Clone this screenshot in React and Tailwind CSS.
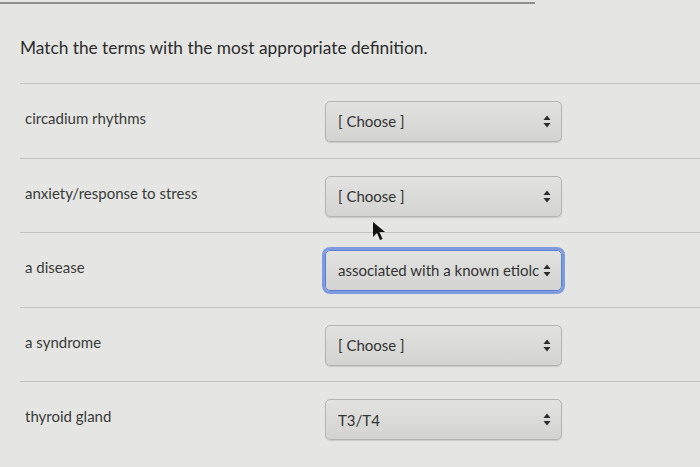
import React from 'react';

const rows = [
    { term: 'circadium rhythms', value: '[ Choose ]' },
    { term: 'anxiety/response to stress', value: '[ Choose ]' },
    { term: 'a disease', value: 'associated with a known etiolc', focused: true },
    { term: 'a syndrome', value: '[ Choose ]' },
    { term: 'thyroid gland', value: 'T3/T4' },
];

// little up/down caret like the native select
const Caret = () => (
    <svg width="8" height="13" viewBox="0 0 8 13" className="shrink-0">
        <path d="M4 0.5 L7.5 5 L0.5 5 Z" fill="#2b2b2b" />
        <path d="M4 12.5 L7.5 8 L0.5 8 Z" fill="#2b2b2b" />
    </svg>
);

const SelectBox = ({ value, focused }) => (
    <div
        className={
            'flex items-center justify-between w-[237px] h-[41px] pl-[12px] pr-[10px] rounded-[5px] border bg-gradient-to-b from-[#e2e3e1] to-[#d3d4d2] shadow-[0_1px_1px_rgba(0,0,0,0.12)] ' +
            (focused
                ? 'border-[#5c7fd4] ring-[3px] ring-[#7f9be0]'
                : 'border-[#b4b5b3]')
        }
    >
        <span className="text-[15px] text-[#333] whitespace-nowrap overflow-hidden">{value}</span>
        <Caret />
    </div>
);

export default function App() {
    return (
        <div
            className="relative w-[700px] h-[467px] overflow-hidden bg-[#e5e6e3]"
            style={{ fontFamily: 'Lato, "Open Sans", sans-serif' }}
        >
            {/* top edge of the previous panel */}
            <div className="mt-[2px] w-[535px] h-[2px] bg-[#8f908e]" />

            <div className="pl-[20px]">
                {/* Question */}
                <div className="pt-[33px] pb-[24px] border-b border-[#c3c4c1]">
                    <p className="text-[17.3px] leading-[22px] text-[#2c2c2c]">
                        Match the terms with the most appropriate definition.
                    </p>
                </div>

                {/* Answer rows */}
                {rows.map((row, i) => (
                    <div
                        key={row.term}
                        className={
                            'flex items-start h-[74.6px] ' +
                            (i < rows.length - 1 ? 'border-b border-[#c3c4c1]' : '')
                        }
                    >
                        <div className="w-[305px] pl-[5px] pt-[24px] text-[15px] leading-[20px] text-[#3a3a3a]">
                            {row.term}
                        </div>
                        <div className="pt-[17px]">
                            <SelectBox value={row.value} focused={row.focused} />
                        </div>
                    </div>
                ))}
            </div>

            {/* mouse pointer */}
            <svg
                width="14"
                height="20"
                viewBox="0 0 14 20"
                className="absolute left-[372px] top-[221px]"
            >
                <path d="M1 1 L1 16 L5 12 L8 19 L10.5 18 L7.5 11 L13 11 Z" fill="#111" />
            </svg>
        </div>
    );
}
